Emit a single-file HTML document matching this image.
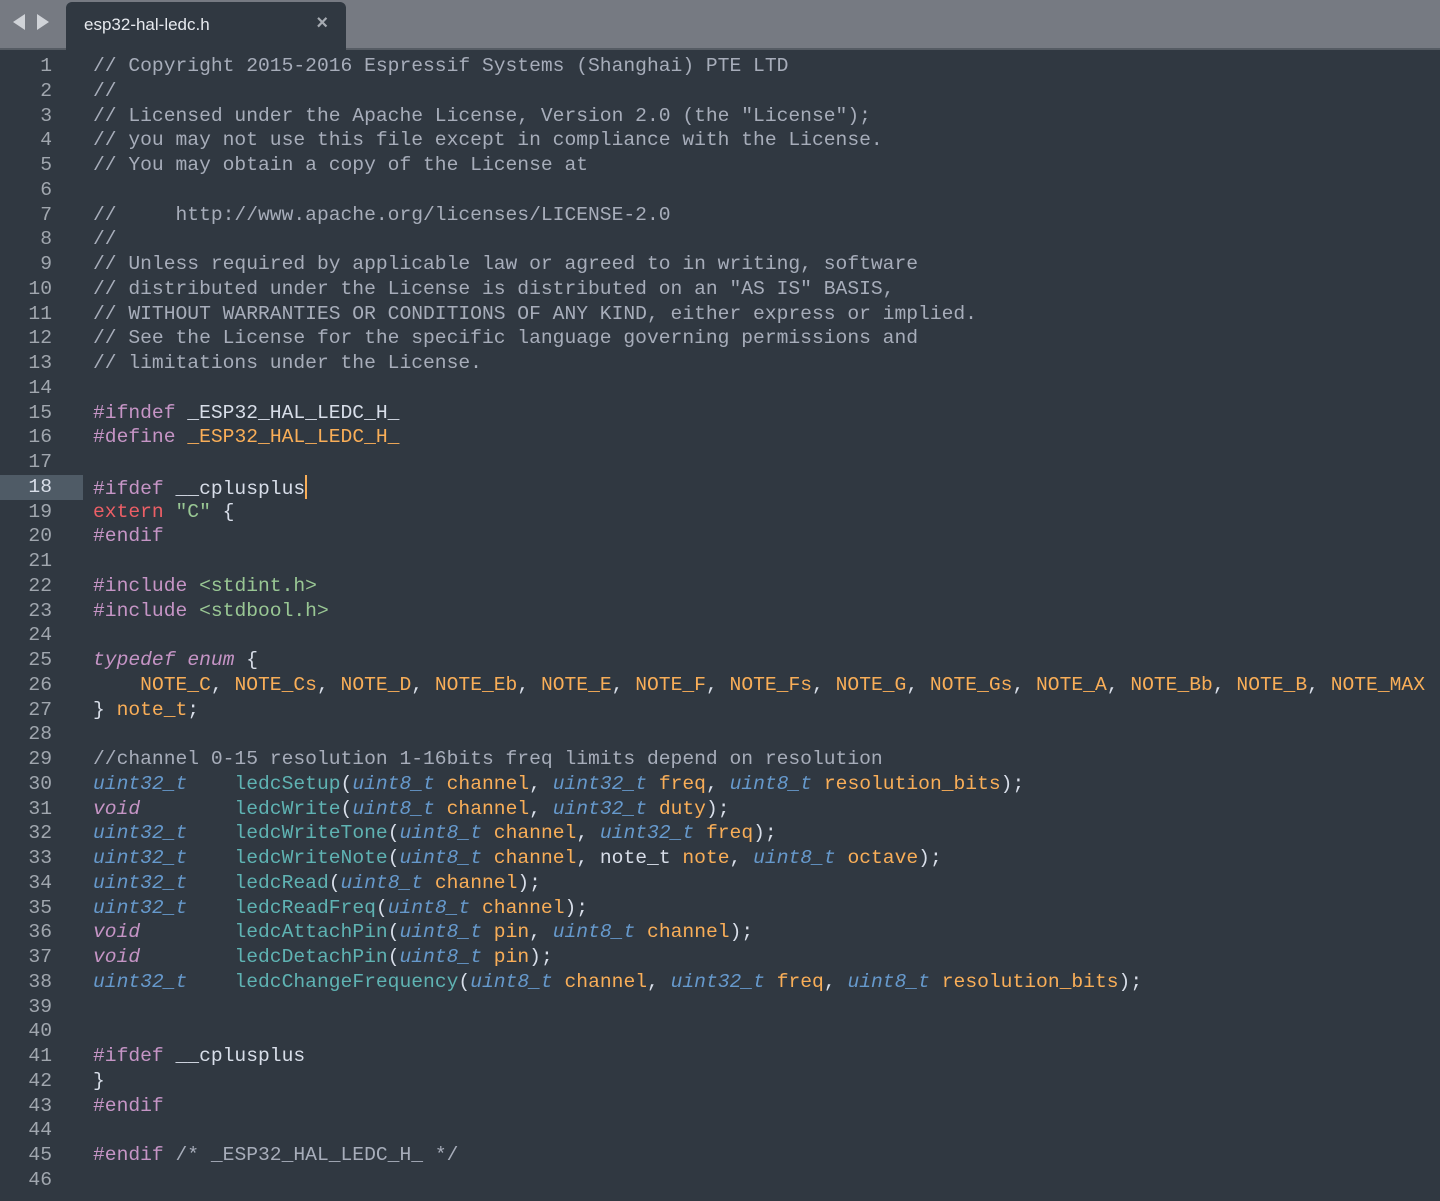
<!DOCTYPE html>
<html><head><meta charset="utf-8"><style>
body{margin:0;width:1440px;height:1201px;background:#303841;overflow:hidden;font-family:"Liberation Mono",monospace}
.bar{position:absolute;left:0;top:0;width:1440px;height:48px;background:#767a82;border-bottom:2px solid #565c64}
.tab{position:absolute;left:66px;top:2px;width:280px;height:48px;background:#303841;border-radius:6px 6px 0 0;font-family:"Liberation Sans",sans-serif;font-size:17px;color:#e6e9ee}
.tab span{position:absolute;left:18px;top:13px}
.tab b{position:absolute;right:18px;top:10px;font-weight:bold;color:#a6abb2;font-size:20px}
.arr{position:absolute;top:14px;width:0;height:0;border-top:8px solid transparent;border-bottom:8px solid transparent}
.code{position:absolute;top:54px;left:0;width:1440px;font-size:19.65px;line-height:24.76px;color:#d8dee9}
.l{height:24.76px;position:relative}
.n{position:absolute;left:0;width:52px;text-align:right;color:#a0a6ae;z-index:1}
.hl .n{color:#d8dee9}
.hl::before{content:"";position:absolute;left:0;top:0;width:83px;height:100%;background:#4f5b66}
.t{position:absolute;left:93px;white-space:pre}
.c{color:#a7adba}.p{color:#c695c6}.o{color:#f9ae58}.s{color:#99c794}.k{color:#ec5f66}.f{color:#5fb3b3}.y{color:#6699cc;font-style:italic}.v{color:#c594c5;font-style:italic}
.cur{display:inline-block;width:2px;height:24px;background:#f9ae58;vertical-align:-5px}
</style></head><body>
<div class="bar"></div>
<div class="arr" style="left:13px;border-right:12px solid #d0d3d8"></div>
<div class="arr" style="left:37px;border-left:12px solid #d0d3d8"></div>
<div class="tab"><span>esp32-hal-ledc.h</span><b>×</b></div>
<div class="code"><div class="l"><span class="n">1</span><span class="t c">// Copyright 2015-2016 Espressif Systems (Shanghai) PTE LTD</span></div><div class="l"><span class="n">2</span><span class="t c">//</span></div><div class="l"><span class="n">3</span><span class="t c">// Licensed under the Apache License, Version 2.0 (the "License");</span></div><div class="l"><span class="n">4</span><span class="t c">// you may not use this file except in compliance with the License.</span></div><div class="l"><span class="n">5</span><span class="t c">// You may obtain a copy of the License at</span></div><div class="l"><span class="n">6</span></div><div class="l"><span class="n">7</span><span class="t c">//     http://www.apache.org/licenses/LICENSE-2.0</span></div><div class="l"><span class="n">8</span><span class="t c">//</span></div><div class="l"><span class="n">9</span><span class="t c">// Unless required by applicable law or agreed to in writing, software</span></div><div class="l"><span class="n">10</span><span class="t c">// distributed under the License is distributed on an "AS IS" BASIS,</span></div><div class="l"><span class="n">11</span><span class="t c">// WITHOUT WARRANTIES OR CONDITIONS OF ANY KIND, either express or implied.</span></div><div class="l"><span class="n">12</span><span class="t c">// See the License for the specific language governing permissions and</span></div><div class="l"><span class="n">13</span><span class="t c">// limitations under the License.</span></div><div class="l"><span class="n">14</span></div><div class="l"><span class="n">15</span><span class="t"><span class="p">#ifndef</span> _ESP32_HAL_LEDC_H_</span></div><div class="l"><span class="n">16</span><span class="t"><span class="p">#define</span> <span class="o">_ESP32_HAL_LEDC_H_</span></span></div><div class="l"><span class="n">17</span></div><div class="l hl"><span class="n">18</span><span class="t"><span class="p">#ifdef</span> __cplusplus<span class="cur"></span></span></div><div class="l"><span class="n">19</span><span class="t"><span class="k">extern</span> <span class="s">"C"</span> {</span></div><div class="l"><span class="n">20</span><span class="t p">#endif</span></div><div class="l"><span class="n">21</span></div><div class="l"><span class="n">22</span><span class="t"><span class="p">#include</span> <span class="s">&lt;stdint.h&gt;</span></span></div><div class="l"><span class="n">23</span><span class="t"><span class="p">#include</span> <span class="s">&lt;stdbool.h&gt;</span></span></div><div class="l"><span class="n">24</span></div><div class="l"><span class="n">25</span><span class="t"><span class="v">typedef</span> <span class="v">enum</span> {</span></div><div class="l"><span class="n">26</span><span class="t">    <span class="o">NOTE_C</span>, <span class="o">NOTE_Cs</span>, <span class="o">NOTE_D</span>, <span class="o">NOTE_Eb</span>, <span class="o">NOTE_E</span>, <span class="o">NOTE_F</span>, <span class="o">NOTE_Fs</span>, <span class="o">NOTE_G</span>, <span class="o">NOTE_Gs</span>, <span class="o">NOTE_A</span>, <span class="o">NOTE_Bb</span>, <span class="o">NOTE_B</span>, <span class="o">NOTE_MAX</span></span></div><div class="l"><span class="n">27</span><span class="t">} <span class="o">note_t</span>;</span></div><div class="l"><span class="n">28</span></div><div class="l"><span class="n">29</span><span class="t c">//channel 0-15 resolution 1-16bits freq limits depend on resolution</span></div><div class="l"><span class="n">30</span><span class="t"><span class="y">uint32_t</span>    <span class="f">ledcSetup</span>(<span class="y">uint8_t</span> <span class="o">channel</span>, <span class="y">uint32_t</span> <span class="o">freq</span>, <span class="y">uint8_t</span> <span class="o">resolution_bits</span>);</span></div><div class="l"><span class="n">31</span><span class="t"><span class="v">void</span>        <span class="f">ledcWrite</span>(<span class="y">uint8_t</span> <span class="o">channel</span>, <span class="y">uint32_t</span> <span class="o">duty</span>);</span></div><div class="l"><span class="n">32</span><span class="t"><span class="y">uint32_t</span>    <span class="f">ledcWriteTone</span>(<span class="y">uint8_t</span> <span class="o">channel</span>, <span class="y">uint32_t</span> <span class="o">freq</span>);</span></div><div class="l"><span class="n">33</span><span class="t"><span class="y">uint32_t</span>    <span class="f">ledcWriteNote</span>(<span class="y">uint8_t</span> <span class="o">channel</span>, note_t <span class="o">note</span>, <span class="y">uint8_t</span> <span class="o">octave</span>);</span></div><div class="l"><span class="n">34</span><span class="t"><span class="y">uint32_t</span>    <span class="f">ledcRead</span>(<span class="y">uint8_t</span> <span class="o">channel</span>);</span></div><div class="l"><span class="n">35</span><span class="t"><span class="y">uint32_t</span>    <span class="f">ledcReadFreq</span>(<span class="y">uint8_t</span> <span class="o">channel</span>);</span></div><div class="l"><span class="n">36</span><span class="t"><span class="v">void</span>        <span class="f">ledcAttachPin</span>(<span class="y">uint8_t</span> <span class="o">pin</span>, <span class="y">uint8_t</span> <span class="o">channel</span>);</span></div><div class="l"><span class="n">37</span><span class="t"><span class="v">void</span>        <span class="f">ledcDetachPin</span>(<span class="y">uint8_t</span> <span class="o">pin</span>);</span></div><div class="l"><span class="n">38</span><span class="t"><span class="y">uint32_t</span>    <span class="f">ledcChangeFrequency</span>(<span class="y">uint8_t</span> <span class="o">channel</span>, <span class="y">uint32_t</span> <span class="o">freq</span>, <span class="y">uint8_t</span> <span class="o">resolution_bits</span>);</span></div><div class="l"><span class="n">39</span></div><div class="l"><span class="n">40</span></div><div class="l"><span class="n">41</span><span class="t"><span class="p">#ifdef</span> __cplusplus</span></div><div class="l"><span class="n">42</span><span class="t">}</span></div><div class="l"><span class="n">43</span><span class="t p">#endif</span></div><div class="l"><span class="n">44</span></div><div class="l"><span class="n">45</span><span class="t"><span class="p">#endif</span> <span class="c">/* _ESP32_HAL_LEDC_H_ */</span></span></div><div class="l"><span class="n">46</span></div></div>
</body></html>
